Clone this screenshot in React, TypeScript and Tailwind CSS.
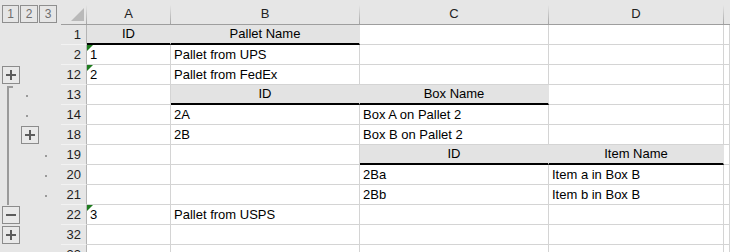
import React from 'react';

type Cell = { text?: string; head?: boolean; flag?: boolean };

type Outline = {
  l1?: 'plus' | 'minus' | 'line' | 'lineTop';
  l2?: 'plus' | 'dot';
  l3?: 'dot';
};

type Row = { num: number; outline: Outline; cells: Cell[] };

const widths = ['w-[84px]', 'w-[189px]', 'w-[189px]', 'w-[175px]', 'flex-1'];
const letters = ['A', 'B', 'C', 'D', ''];

const rows: Row[] = [
  { num: 1, outline: {}, cells: [{ text: 'ID', head: true }, { text: 'Pallet Name', head: true }, {}, {}, {}] },
  { num: 2, outline: {}, cells: [{ text: '1', flag: true }, { text: 'Pallet from UPS' }, {}, {}, {}] },
  { num: 12, outline: { l1: 'plus' }, cells: [{ text: '2', flag: true }, { text: 'Pallet from FedEx' }, {}, {}, {}] },
  { num: 13, outline: { l1: 'lineTop', l2: 'dot' }, cells: [{}, { text: 'ID', head: true }, { text: 'Box Name', head: true }, {}, {}] },
  { num: 14, outline: { l1: 'line', l2: 'dot' }, cells: [{}, { text: '2A' }, { text: 'Box A on Pallet 2' }, {}, {}] },
  { num: 18, outline: { l1: 'line', l2: 'plus' }, cells: [{}, { text: '2B' }, { text: 'Box B on Pallet 2' }, {}, {}] },
  { num: 19, outline: { l1: 'line', l3: 'dot' }, cells: [{}, {}, { text: 'ID', head: true }, { text: 'Item Name', head: true }, {}] },
  { num: 20, outline: { l1: 'line', l3: 'dot' }, cells: [{}, {}, { text: '2Ba' }, { text: 'Item a in Box B' }, {}] },
  { num: 21, outline: { l1: 'line', l3: 'dot' }, cells: [{}, {}, { text: '2Bb' }, { text: 'Item b in Box B' }, {}] },
  { num: 22, outline: { l1: 'minus' }, cells: [{ text: '3', flag: true }, { text: 'Pallet from USPS' }, {}, {}, {}] },
  { num: 32, outline: { l1: 'plus' }, cells: [{}, {}, {}, {}, {}] },
  { num: 33, outline: {}, cells: [{}, {}, {}, {}, {}] },
];

const OutlineButton = ({ minus }: { minus?: boolean }) => (
  <div className="mt-[1px] flex h-[18px] w-[18px] items-center justify-center border border-[#8c8c8c] bg-[#e9e9e9]">
    <svg width="10" height="10" viewBox="0 0 10 10">
      {minus ? (
        <path d="M0 4h10v2H0z" fill="#5c5c5c" />
      ) : (
        <path d="M0 4h10v2H0zM4 0h2v10H4z" fill="#5c5c5c" />
      )}
    </svg>
  </div>
);

const Dot = () => <div className="ml-[5px] mt-[10px] h-[2px] w-[2px] bg-[#9a9a9a]" />;

const OutlineCell = ({ o }: { o: Outline }) => (
  <div className="flex h-[20px] w-[61px] shrink-0 gap-[1px] bg-[#e6e6e6] pl-[2px]">
    <div className="w-[18px]">
      {o.l1 === 'plus' && <OutlineButton />}
      {o.l1 === 'minus' && <OutlineButton minus />}
      {o.l1 === 'line' && <div className="ml-[5px] h-full w-[6px] border-l-2 border-[#9a9a9a]" />}
      {o.l1 === 'lineTop' && (
        <div className="ml-[5px] mt-[1px] h-[19px] w-[6px] border-l-2 border-t-2 border-[#9a9a9a]" />
      )}
    </div>
    <div className="w-[18px]">
      {o.l2 === 'plus' && <OutlineButton />}
      {o.l2 === 'dot' && <Dot />}
    </div>
    <div className="w-[18px]">{o.l3 === 'dot' && <Dot />}</div>
  </div>
);

const HeaderSep = () => (
  <div className="mt-[5px] w-[1px] shrink-0 bg-gradient-to-b from-[#e6e6e6] to-[#a6a6a6]" />
);

const App = () => {
  return (
    <div className="h-[252px] w-[730px] overflow-hidden bg-white font-['Liberation_Sans',Arial,sans-serif] text-[13px] text-black">
      {/* column headers */}
      <div className="flex h-[25px] bg-[#e6e6e6]">
        <div className="flex w-[61px] shrink-0 gap-[1px] pl-[2px] pt-[5px]">
          {['1', '2', '3'].map((n, i) => (
            <div
              key={n}
              className={`flex h-[18px] items-center justify-center border border-[#8f8f8f] text-[12px] leading-none text-[#6e6e6e] ${
                i === 0 ? 'w-[17px]' : 'w-[18px]'
              }`}
            >
              {n}
            </div>
          ))}
        </div>
        <div className="flex w-[26px] shrink-0 border-b border-[#9e9e9e]">
          <div className="flex flex-1 items-end justify-end pb-[3px] pr-[2px]">
            <svg width="13" height="13" viewBox="0 0 13 13">
              <polygon points="13,0 13,13 0,13" fill="#b9b9b9" />
            </svg>
          </div>
          <HeaderSep />
        </div>
        {letters.map((l, i) => (
          <div key={i} className={`flex shrink-0 border-b border-[#9e9e9e] ${widths[i]}`}>
            <div className="flex flex-1 items-end justify-center pb-[2px] leading-[16px] text-[#222]">{l}</div>
            {i < 4 && <HeaderSep />}
          </div>
        ))}
      </div>

      {/* body */}
      {rows.map((r) => (
        <div key={r.num} className="flex h-[20px]">
          <OutlineCell o={r.outline} />
          <div className="flex h-[20px] w-[26px] shrink-0 justify-end border-b border-r border-b-[#f3f3f3] border-r-[#b4b4b4] bg-[#e6e6e6] pr-[5px] leading-[19px] text-[#1f1f1f]">
            {r.num}
          </div>
          {r.cells.map((c, i) => (
            <div
              key={i}
              className={`relative h-[20px] shrink-0 overflow-hidden whitespace-nowrap border-r ${widths[i]} ${
                c.head
                  ? 'border-b-2 border-b-black border-r-[#e3e3e3] bg-[#e3e3e3] text-center leading-[18px]'
                  : 'border-b border-[#d4d4d4] pl-[3px] leading-[19px]'
              }`}
            >
              {c.flag && (
                <svg className="absolute left-0 top-0" width="6" height="6" viewBox="0 0 6 6">
                  <polygon points="0,0 6,0 0,6" fill="#1e7b1e" />
                </svg>
              )}
              {c.text}
            </div>
          ))}
        </div>
      ))}
    </div>
  );
};

export default App;
